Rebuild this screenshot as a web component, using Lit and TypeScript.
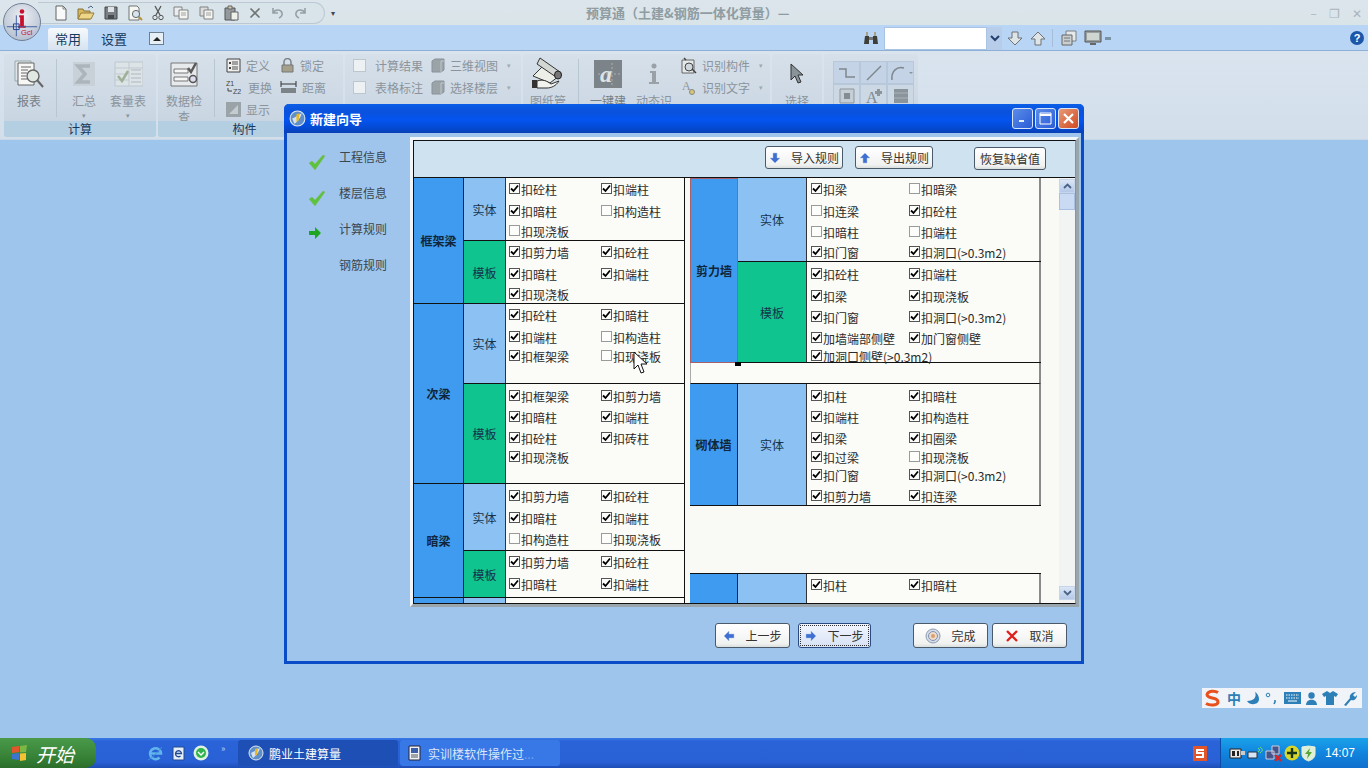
import { LitElement, css, html } from "lit";
import { customElement } from "lit/decorators.js";
import { classMap } from "lit/directives/class-map.js";

type Row = [number, string, boolean, string?, boolean?];
type Part = { kind: string; green?: boolean; height: number; rows: Row[] };
type Wall = { name: string; selected?: boolean; parts: Part[]; gapAfter?: number; gapKind?: string };

const leftWalls: Wall[] = [
  {
    name: "框架梁",
    parts: [
      { kind: "实体", height: 63, rows: [[22, "扣砼柱", true, "扣端柱", true], [21, "扣暗柱", true, "扣构造柱", false], [19, "扣现浇板", false]] },
      { kind: "模板", green: true, height: 63, rows: [[22, "扣剪力墙", true, "扣砼柱", true], [21, "扣暗柱", true, "扣端柱", true], [19, "扣现浇板", true]] },
    ],
  },
  {
    name: "次梁",
    parts: [
      { kind: "实体", height: 80, rows: [[22, "扣砼柱", true, "扣暗柱", true], [22, "扣端柱", true, "扣构造柱", false], [15, "扣框架梁", true, "扣现浇板", false]] },
      { kind: "模板", green: true, height: 100, rows: [[23, "扣框架梁", true, "扣剪力墙", true], [20, "扣暗柱", true, "扣端柱", true], [22, "扣砼柱", true, "扣砖柱", true], [16, "扣现浇板", true]] },
    ],
  },
  {
    name: "暗梁",
    parts: [
      { kind: "实体", height: 67, rows: [[24, "扣剪力墙", true, "扣砼柱", true], [20, "扣暗柱", true, "扣端柱", true], [22, "扣构造柱", false, "扣现浇板", false]] },
      { kind: "模板", green: true, height: 47, rows: [[22, "扣剪力墙", true, "扣砼柱", true], [22, "扣暗柱", true, "扣端柱", true]] },
    ],
  },
  { name: "", parts: [{ kind: "", height: 30, rows: [] }] },
];

const rightWalls: Wall[] = [
  {
    name: "剪力墙",
    selected: true,
    gapAfter: 21,
    gapKind: "lined",
    parts: [
      { kind: "实体", height: 84, rows: [[22, "扣梁", true, "扣暗梁", false], [21, "扣连梁", false, "扣砼柱", true], [21, "扣暗柱", false, "扣端柱", false], [19, "扣门窗", true, "扣洞口(>0.3m2)", true]] },
      { kind: "模板", green: true, height: 101, rows: [[24, "扣砼柱", true, "扣端柱", true], [19, "扣梁", true, "扣现浇板", true], [23, "扣门窗", true, "扣洞口(>0.3m2)", true], [19, "加墙端部侧壁", true, "加门窗侧壁", true], [18, "加洞口侧壁(>0.3m2)", true]] },
    ],
  },
  {
    name: "砌体墙",
    gapAfter: 68,
    gapKind: "closed",
    parts: [
      { kind: "实体", height: 122, rows: [[24, "扣柱", true, "扣暗柱", true], [18, "扣端柱", true, "扣构造柱", true], [24, "扣梁", true, "扣圈梁", true], [14, "扣过梁", true, "扣现浇板", false], [22, "扣门窗", true, "扣洞口(>0.3m2)", true], [20, "扣剪力墙", true, "扣连梁", true]] },
    ],
  },
  { name: "", parts: [{ kind: "", height: 30, rows: [[22, "扣柱", true, "扣暗柱", true]] }] },
];

const doc = (w = 16) => html`<svg width=${w} height=${w} viewBox="0 0 16 16"><path d="M3 1h7l3 3v11H3z" fill="#fdfdfa" stroke="#555"/><path d="M10 1v3h3" fill="none" stroke="#777"/></svg>`;
const qat = [
  doc(),
  html`<svg width="18" height="16" viewBox="0 0 18 16"><path d="M1 14V4h5l1 2h6v8z" fill="#d9b24a" stroke="#7c6420"/><path d="M1 14l3-6h13l-3 6z" fill="#f2d57a" stroke="#8c7026"/><path d="M11 3l3-2 2 2" fill="none" stroke="#357"/></svg>`,
  html`<svg width="16" height="16" viewBox="0 0 16 16"><path d="M2 2h12v12H2z" fill="#6d7278" stroke="#333"/><path d="M5 2h6v5H5z" fill="#dfe4e8"/><path d="M5 10h6v4H5z" fill="#30363b"/></svg>`,
  html`<svg width="16" height="16" viewBox="0 0 16 16"><path d="M2 1h8l2 2v12H2z" fill="#fafaf4" stroke="#666"/><circle cx="9" cy="9" r="3.6" fill="#d7e5ee" stroke="#555"/><path d="M12 12l3 3" stroke="#b48a20" stroke-width="2"/></svg>`,
  html`<svg width="14" height="16" viewBox="0 0 14 16"><path d="M4 1l5 9M10 1L5 10" stroke="#444" stroke-width="1.3" fill="none"/><circle cx="4" cy="12.5" r="2.2" fill="none" stroke="#444"/><circle cx="10" cy="12.5" r="2.2" fill="none" stroke="#444"/></svg>`,
  html`<svg width="17" height="16" viewBox="0 0 17 16"><path d="M1 2h8v9H1z" fill="#eee" stroke="#777"/><path d="M6 5h9v9H6z" fill="#f8f8f0" stroke="#777"/><path d="M8 8h5M8 10h5" stroke="#999"/></svg>`,
  html`<svg width="17" height="16" viewBox="0 0 17 16"><path d="M2 2h8v9H2z" fill="#ddd" stroke="#777"/><path d="M6 5h9v9H6z" fill="#f8f8f0" stroke="#777"/><path d="M8 8h5M8 10h5" stroke="#999"/></svg>`,
  html`<svg width="17" height="16" viewBox="0 0 17 16"><path d="M2 3h10v12H2z" fill="#8b8f92" stroke="#444"/><path d="M5 1h4v3H5z" fill="#d4c9a0" stroke="#555"/><path d="M8 7h7v8H8z" fill="#f2f2ea" stroke="#555"/></svg>`,
  html`<svg width="14" height="14" viewBox="0 0 14 14"><path d="M2.500 2.500l9 9M11.500 2.500l-9 9" stroke="#666" stroke-width="1.700"/></svg>`,
  html`<svg width="15" height="14" viewBox="0 0 15 14"><path d="M3 2v5h5M3 7c2-4 8-4 9 0 .5 2-1 4-3 5" fill="none" stroke="#8d969e" stroke-width="1.600"/></svg>`,
  html`<svg width="15" height="14" viewBox="0 0 15 14"><path d="M12 2v5H7M12 7c-2-4-8-4-9 0-.5 2 1 4 3 5" fill="none" stroke="#8d969e" stroke-width="1.600"/></svg>`,
];

const bigIcons = {
  report: html`<svg width="30" height="30" viewBox="0 0 30 30"><path d="M1 2h16v20H1z" fill="#dfe4e8" stroke="#9aa"/><path d="M4 4h16v22H4z" fill="#f7f8f6" stroke="#666"/><path d="M7 8h10M7 11h7M7 14h6M7 17h5M7 20h6" stroke="#666"/><circle cx="19" cy="17" r="6" fill="#dfe8e2" stroke="#666" stroke-width="1.400"/><path d="M23 21l6 7" stroke="#666" stroke-width="2"/></svg>`,
  sum: html`<svg width="24" height="26" viewBox="0 0 24 26"><path d="M1 1h22v24H1z" fill="#c9d1d8"/><path d="M18 5H6l7 8-7 8h12" fill="none" stroke="#adb5bc" stroke-width="3.500"/></svg>`,
  table: html`<svg width="30" height="28" viewBox="0 0 30 28"><path d="M2 2h28v24H2z" fill="#dde4e8" stroke="#bcc6cc"/><path d="M2 8h28M2 14h14M2 20h14M16 2v24" stroke="#c0c9cf"/><path d="M5 16l4 5 6-10" fill="none" stroke="#9fb098" stroke-width="2.500"/><path d="M18 10h10M18 14h10M18 18h10M18 22h10" stroke="#aeb7bd"/></svg>`,
  check: html`<svg width="28" height="26" viewBox="0 0 28 26"><path d="M1 2h26v23H1z" fill="#e6eaec" stroke="#777"/><path d="M4 8h14v4H4zM4 16h14v4H4z" fill="#f5f6f5" stroke="#777"/><path d="M18 7l3 4 5-9" fill="none" stroke="#5a5a5a" stroke-width="2.500"/><circle cx="23" cy="18" r="3.500" fill="#dde" stroke="#555" stroke-width="1.500"/></svg>`,
  drawing: html`<svg width="34" height="34" viewBox="0 0 34 34"><path d="M2 19L12 9l16 10-9 7z" fill="#eceee8" stroke="#333"/><path d="M9 1l20 14c3 3-1 8-4 5L6 7z" fill="#d3d7d3" stroke="#333"/><ellipse cx="27" cy="18" rx="3.500" ry="4" fill="#777" stroke="#222"/><path d="M1 23h5v8H1z" fill="#333"/><path d="M6 24c6-2 10 0 14 3l8-3c-3 5-8 7-12 7H6z" fill="#f2f3ef" stroke="#333"/></svg>`,
  onekey: html`<svg width="28" height="28" viewBox="0 0 28 28"><path d="M0 0h28v28H0z" fill="#7d8489"/><path d="M18 3v22M4 14h24" stroke="#aab0b4" stroke-dasharray="2 2"/><text x="6" y="22" font-family="Liberation Serif, serif" font-size="24" font-style="italic" font-weight="700" fill="#dfe3e3">a</text></svg>`,
  info: html`<svg width="14" height="22" viewBox="0 0 14 22"><circle cx="7" cy="3" r="2.500" fill="#9aa2a8"/><path d="M3 8h6v11h3v2H2v-2h3v-9H3z" fill="#9aa2a8"/></svg>`,
  pointer: html`<svg width="16" height="22" viewBox="0 0 16 22"><path d="M2 1l0 16 4-4 3 7 3-1-3-7h5z" fill="#89939a" stroke="#333"/></svg>`,
};

const smallIcons = {
  define: html`<svg width="15" height="15" viewBox="0 0 15 15"><path d="M1 1h13v13H1z" fill="#eee" stroke="#444"/><path d="M3 4h2v2H3zM3 9h2v2H3z" fill="#444"/><path d="M6 4h6M6 6h6M6 9h6M6 11h6" stroke="#555"/></svg>`,
  lock: html`<svg width="15" height="15" viewBox="0 0 15 15"><path d="M4 7V4a3.500 3.500 0 0 1 7 0v3" fill="none" stroke="#7b8288" stroke-width="1.500"/><path d="M2 7h11v7H2z" fill="#a5a08c" stroke="#777"/></svg>`,
  swap: html`<svg width="17" height="16" viewBox="0 0 17 16"><text x="0" y="7" font-size="7" font-family="Liberation Sans, sans-serif" fill="#444">Z1</text><text x="7" y="15" font-size="7" font-family="Liberation Sans, sans-serif" fill="#444">Z2</text><path d="M2 9v3h4" fill="none" stroke="#444"/></svg>`,
  distance: html`<svg width="17" height="14" viewBox="0 0 17 14"><path d="M1 1v6M16 1v6M1 4h15" stroke="#333" fill="none"/><path d="M1 8h15v5H1z" fill="#7d8489"/></svg>`,
  show: html`<svg width="15" height="15" viewBox="0 0 15 15"><path d="M0 0h15v15H0z" fill="#9aa3a8"/><path d="M3 12L12 3v9z" fill="#c5ccd0"/></svg>`,
  box: html`<svg width="14" height="15" viewBox="0 0 14 15"><path d="M1 3l3-2h9v11l-3 2H1z" fill="#9aa3a8" stroke="#89929a"/><path d="M10 3h3M10 3v11" stroke="#c0c7cb"/></svg>`,
  recog: html`<svg width="16" height="17" viewBox="0 0 16 17"><path d="M1 3h12v13H1z" fill="#e5e8e8" stroke="#666"/><circle cx="8" cy="10" r="4" fill="#cfd8dd" stroke="#444"/><path d="M3 1l2 2M11 12l4 4" stroke="#444" stroke-width="1.500"/></svg>`,
  recogText: html`<svg width="16" height="17" viewBox="0 0 16 17"><text x="1" y="11" font-size="12" font-family="Liberation Serif, serif" fill="#8d969d">A</text><circle cx="11" cy="13" r="2.500" fill="#d8c670" stroke="#888"/></svg>`,
};

const toolIcons = [
  html`<svg width="20" height="20" viewBox="0 0 20 20"><path d="M2 6h7v8h9" fill="none" stroke="#7d878e" stroke-width="1.500"/></svg>`,
  html`<svg width="20" height="20" viewBox="0 0 20 20"><path d="M3 17L17 3" stroke="#7d878e" stroke-width="1.500"/></svg>`,
  html`<svg width="26" height="20" viewBox="0 0 26 20"><path d="M4 17C3 8 9 3 16 5" fill="none" stroke="#7d878e" stroke-width="1.500"/><path d="M21 9l2 2 2-2" fill="#8a949b"/></svg>`,
  html`<svg width="20" height="20" viewBox="0 0 20 20"><path d="M3 3h14v14H3z" fill="#c5ced4" stroke="#8d979e"/><path d="M7 7h6v6H7z" fill="#828c93"/></svg>`,
  html`<svg width="20" height="20" viewBox="0 0 20 20"><text x="2" y="17" font-size="16" font-family="Liberation Serif, serif" fill="#7f8a91">A</text><path d="M13 3h3v2h2v3h-2v2h-3V8h-2V5h2z" fill="#8b959b"/></svg>`,
  html`<svg width="20" height="20" viewBox="0 0 20 20"><path d="M3 3h14v14H3z" fill="#8a949b"/><path d="M3 7h14M3 12h14" stroke="#aab3b9"/></svg>`,
];

const globe = (size = 16) => html`<svg width=${size} height=${size} viewBox="0 0 16 16"><circle cx="8" cy="8" r="7" fill="#5f8fc9" stroke="#dfe8f2"/><path d="M3 8c3-1 6-4 9-5-1 4-4 8-7 10z" fill="#d8e2ee"/><path d="M7 4l3-1-1 7-2 1z" fill="#e9b820"/></svg>`;

const arrowDown = html`<svg width="12" height="12" viewBox="0 0 12 12"><path d="M4 1h4v5h3l-5 5-5-5h3z" fill="#3f6fd0" stroke="#aac0ea" stroke-width=".5"/></svg>`;
const arrowUp = html`<svg width="12" height="12" viewBox="0 0 12 12"><path d="M4 11h4V6h3L6 1 1 6h3z" fill="#3f6fd0" stroke="#aac0ea" stroke-width=".5"/></svg>`;
const arrowLeft = html`<svg width="12" height="12" viewBox="0 0 12 12"><path d="M11 4v4H6v3L1 6l5-5v3z" fill="#3f6fd0" stroke="#aac0ea" stroke-width=".5"/></svg>`;
const arrowRight = html`<svg width="12" height="12" viewBox="0 0 12 12"><path d="M1 4v4h5v3l5-5-5-5v3z" fill="#3f6fd0" stroke="#aac0ea" stroke-width=".5"/></svg>`;
const greenCheck = html`<svg width="18" height="16" viewBox="0 0 18 16"><path d="M1 9l3-2 3 3 8-9 2 1-10 14z" fill="#5cc43a" stroke="#8fae80" stroke-width=".5"/></svg>`;
const greenArrow = html`<svg width="14" height="14" viewBox="0 0 14 14"><path d="M1 5h6V1l6 6-6 6V9H1z" fill="#1fa51f"/></svg>`;

@customElement("rule-check")
class RuleCheck extends LitElement {
  static properties = { label: {}, on: { type: Boolean } };
  label = "";
  on = false;
  static styles = css`
    :host { display: flex; align-items: flex-start; white-space: nowrap; }
    .box { width: 11px; height: 11px; flex: none; background: #fdfdfb; border: 1px solid #9a9a9a; box-sizing: border-box; display: flex; }
    .box.on { border-color: #555; }
    .txt { margin-left: 1px; line-height: 14px; color: #2a2a2a; font-size: 12px; }
  `;
  render() {
    return html`<span class=${classMap({ box: true, on: this.on })}>${this.on
      ? html`<svg width="9" height="9" viewBox="0 0 9 9"><path d="M1 4.500l2.500 2.500L8 1.500" fill="none" stroke="#000" stroke-width="1.800"/></svg>`
      : ""}</span><span class="txt">${this.label}</span>`;
  }
}

@customElement("app-root")
export class AppRoot extends LitElement {
  static styles = css`
    :host { display: flex; flex-direction: column; width: 1368px; height: 768px; overflow: hidden; position: relative; background: #9ec5ec; font-family: "Noto Sans CJK SC", "Liberation Sans", sans-serif; font-size: 12px; color: #222; }
    svg { display: block; flex: none; }

    .titlebar { height: 25px; flex: none; background: linear-gradient(#dce5ec, #d9e4e8); display: flex; align-items: center; }
    .qat { margin-left: 38px; width: 287px; height: 22px; margin-top: 1px; box-sizing: border-box; border: 1px solid #bcc9d4; border-left: none; border-radius: 0 12px 12px 0; background: #d8e3ea; display: flex; align-items: center; justify-content: space-between; padding: 0 16px 0 15px; }
    .qat svg { opacity: .88; }
    .qat-more { margin-left: 6px; width: 6px; color: #445; font-size: 8px; }
    .app-title { flex: 1; text-align: center; margin-left: -272px; font-size: 13px; font-weight: 700; color: #8f9ca2; white-space: nowrap; }
    .win-ctl { display: flex; gap: 12px; margin-right: 6px; color: #aab4ba; }
    .logo { position: absolute; left: 3px; top: 3px; width: 38px; height: 38px; border-radius: 50%; background: radial-gradient(circle at 50% 35%, #eef0f4, #a6b4c8); border: 1px solid #6f7f95; box-sizing: border-box; }

    .tabrow { height: 26px; flex: none; background: #b9d5f5; display: flex; align-items: flex-end; border-bottom: 1px solid #8fb0d6; box-sizing: border-box; color: #173a5e; padding-left: 48px; }
    .tab { width: 40px; height: 22px; display: flex; align-items: center; justify-content: center; font-size: 13px; padding-bottom: 1px; box-sizing: border-box; }
    .tab.on { background: linear-gradient(#f6f9fc, #d7e3f0); border-radius: 3px 3px 0 0; color: #13395c; }
    .tab.off { width: 52px; }
    .collapse { width: 15px; height: 13px; border: 1px solid #6b7f94; background: #e6eef6; box-sizing: border-box; margin: 0 0 5px 9px; display: flex; align-items: center; justify-content: center; }
    .collapse i { border: 4px solid transparent; border-bottom: 4px solid #222; border-top: none; }
    .find { margin-left: auto; display: flex; align-items: center; height: 24px; margin-right: 4px; }
    .find-input { margin-left: 5px; width: 103px; height: 23px; background: #fff; border: 1px solid #a9c4e2; box-sizing: border-box; }
    .find-drop { width: 15px; height: 23px; background: #b8cdea; margin-right: 1px; display: flex; align-items: center; justify-content: center; }
    .find-nav { width: 23px; display: flex; justify-content: center; }
    .find-sep { width: 1px; height: 18px; background: #a5bdd9; margin: 0 8px 0 3px; }
    .find-gap { margin-right: 7px; }
    .find-tri { margin-left: 3px; width: 6px; border-top: 3px solid #7b93a8; height: 0; }
    .help { margin-left: 239px; width: 14px; height: 14px; border-radius: 50%; background: #1c56a8; color: #fff; font-size: 11px; font-weight: 700; line-height: 14px; text-align: center; font-family: "Liberation Sans", sans-serif; }

    .ribbon { height: 89px; flex: none; background: linear-gradient(#d9e4ef, #d2deea); display: flex; padding: 3px 0 2px 4px; box-sizing: border-box; gap: 2px; color: #8b949c; border-bottom: 1px solid #c8d8e8; }
    .group { display: flex; flex-direction: column; border-radius: 3px; background: linear-gradient(#d6e0ea, #c6d3e0); overflow: hidden; flex: none; }
    .g-calc { width: 152px; } .g-part { width: 185px; } .g-view { width: 176px; } .g-draw { width: 247px; } .g-pick { width: 50px; } .g-tool { width: 94px; }
    .g-body { flex: 1; display: flex; min-height: 0; overflow: hidden; padding-left: 4px; }
    .g-foot { height: 16px; flex: none; background: #b4cee2; text-align: center; line-height: 16px; color: #15395c; }
    .g-part .g-foot { padding-right: 12px; }
    .big { width: 44px; flex: none; display: flex; flex-direction: column; align-items: center; }
    .big .ic { height: 33px; flex: none; display: flex; align-items: center; margin-top: 3px; }
    .big .lb { margin-top: 3px; line-height: 16px; text-align: center; flex: none; }
    .big.dark { color: #777f86; }
    .tri { margin-top: 2px; font-size: 7px; line-height: 8px; flex: none; }
    .w42 { width: 42px; } .w46 { width: 46px; }
    .vsep { width: 1px; height: 58px; margin: 5px 5px 0 6px; background: #b8c6d2; flex: none; }
    .sep-a { margin: 5px 11px 0 8px; }
    .sep-b { margin: 5px 6px 0 9px; }
    .smalls { display: grid; grid-template-rows: repeat(3, 22px); grid-auto-flow: column; }
    .sm { display: flex; align-items: center; gap: 5px; white-space: nowrap; }
    .sm-a { width: 54px; } .sm-b { width: 70px; }
    .cb { width: 13px; height: 13px; background: #eef1f3; border: 1px solid #bcc6cd; box-sizing: border-box; margin: 0 4px 0 4px; flex: none; }
    .pad-l { padding-left: 8px; }
    .pad-s { padding-left: 4px; }
    .dd { font-size: 7px; margin-left: 4px; color: #a0a9b0; }
    .tools { display: grid; grid-template-columns: 27px 27px 27px; grid-auto-rows: 23px; margin: 7px 0 0 5px; }
    .tool { display: flex; align-items: center; justify-content: center; background: #ccd8e4; border: 1px solid #b7c8da; box-sizing: border-box; }
    .tool-wide { background: #c4d4e6; }

    .desk { flex: 1; }

    .taskbar { height: 30px; flex: none; background: linear-gradient(#3a79e6 0, #2a63d8 12%, #2960d6 80%, #1d4cb4 100%); display: flex; align-items: stretch; color: #fff; }
    .start { width: 96px; box-sizing: border-box; background: linear-gradient(#4a9a4a, #357f35 70%, #2b6d2b); border-radius: 0 10px 10px 0; display: flex; align-items: center; padding-left: 10px; gap: 6px; font-size: 19px; font-style: italic; }
    .quick { display: flex; align-items: center; gap: 7px; margin-left: 51px; width: 91px; }
    .more { font-size: 9px; margin-top: -9px; margin-left: 5px; color: #bcd2f4; }
    .tb-btn { display: flex; align-items: center; gap: 5px; width: 160px; padding-left: 10px; box-sizing: border-box; margin: 2px 0; border-radius: 3px; font-size: 12px; white-space: nowrap; overflow: hidden; }
    .tb-btn.active { background: #1d4fb5; }
    .tb-btn.idle { background: #3878e6; margin-left: 2px; color: #dbe7f8; padding-left: 8px; }
    .dim { opacity: .35; }
    .sogou-task { margin-left: auto; display: flex; align-items: center; margin-right: 13px; }
    .tray { width: 148px; background: linear-gradient(#1aa2ea, #1184de 50%, #0f70cc); box-shadow: inset 1px 0 #0b4ba8; display: flex; align-items: center; padding-left: 9px; box-sizing: border-box; gap: 1px; }
    .clock { margin-left: 8px; font-family: "Liberation Sans", sans-serif; font-size: 12px; }

    .ime { position: absolute; left: 1202px; top: 688px; width: 160px; height: 20px; background: #f0f4f8; display: flex; align-items: center; justify-content: space-between; padding: 0 4px 0 1px; box-sizing: border-box; color: #2d7fb8; font-weight: 700; font-size: 14px; }

    .dialog { position: absolute; left: 284px; top: 104px; width: 800px; height: 560px; box-sizing: border-box; background: #9fc5ec; border: 3px solid #0a4cc8; border-top: none; border-radius: 5px 5px 0 0; display: flex; flex-direction: column; }
    .d-title { height: 29px; flex: none; margin: 0 -3px; border-radius: 5px 5px 0 0; background: linear-gradient(#0a5ee8 0, #0a52dc 25%, #0454f0 55%, #0449d0 85%, #0a3fb4 100%); display: flex; align-items: center; padding-left: 5px; gap: 4px; color: #fff; font-weight: 700; font-size: 13px; }
    .d-ctls { margin-left: auto; display: flex; gap: 2px; margin-right: 5px; }
    .d-ctl { width: 21px; height: 21px; border-radius: 3px; border: 1px solid #d8e4f8; box-sizing: border-box; background: linear-gradient(135deg, #5b8ce8, #2a5cd8); display: flex; align-items: center; justify-content: center; }
    .d-ctl.close { background: linear-gradient(135deg, #e89a78, #d04a20); }
    .d-body { flex: 1; display: flex; min-height: 0; }
    .nav { width: 123px; flex: none; padding-top: 12px; box-sizing: border-box; color: #3a4650; }
    .nav-row { height: 36px; display: flex; align-items: flex-start; padding-left: 21px; }
    .nav-ic { width: 18px; height: 18px; margin: 9px 13px 0 0; flex: none; }
    .nav-tx { line-height: 24px; white-space: nowrap; }
    .main { flex: 1; display: flex; flex-direction: column; padding-top: 4px; min-width: 0; }
    .panel { width: 669px; height: 470px; flex: none; box-sizing: border-box; border: 3px solid; border-color: #f3f6f8 #9aa6ae #9aa6ae #f3f6f8; display: flex; flex-direction: column; }
    .panel-in { flex: 1; border: 1px solid #111; border-right-color: #8b939a; display: flex; flex-direction: column; min-height: 0; }
    .head { height: 37px; flex: none; background: #cfe2f0; border-bottom: 1px solid #111; display: flex; justify-content: flex-end; align-items: flex-start; padding: 5px 29px 0 0; box-sizing: border-box; gap: 12px; }
    .btn { height: 23px; box-sizing: border-box; border: 1px solid #4a5a6a; border-radius: 3px; background: linear-gradient(#ffffff, #f0f2f0 85%, #d9dedd); display: flex; align-items: center; justify-content: center; gap: 10px; color: #333; white-space: nowrap; }
    .w78 { width: 78px; } .w72 { width: 72px; margin: 1px 0 0 29px; }
    .w75 { width: 75px; height: 25px; } .w73 { width: 73px; height: 25px; }
    .focus { border: 1px solid #2c4a80; outline: 1px dotted #333; outline-offset: -3px; background: linear-gradient(#f2f6ff, #d7e2f4); }
    .scroll { flex: 1; display: flex; min-height: 0; background: #f9faf6; overflow: hidden; }
    .col { flex: none; display: flex; flex-direction: column; }
    .col-l { width: 271px; --c1: 50px; --c2: 41px; --c3: 93px; --pad: 3px; }
    .col-r { width: 351px; margin-left: 5px; --c1: 48px; --c2: 68px; --c3: 99px; --pad: 4px; }
    .wall { display: flex; flex: none; position: relative; }
    .name { width: var(--c1); flex: none; box-sizing: border-box; background: #3f9bf0; display: flex; align-items: center; justify-content: center; font-weight: 700; color: #10263a; border-bottom: 1px solid #111; border-right: 1px solid #223; }
    .name.sel { border: 1px solid #a5616a; background: #3f9bf0; }
    .handle { position: absolute; left: 45px; bottom: -3px; width: 6px; height: 4px; background: #000; }
    .parts { flex: 1; min-width: 0; }
    .part { display: flex; box-sizing: border-box; border-bottom: 1px solid #111; }
    .kind { width: var(--c2); flex: none; background: #8cc2f3; display: flex; align-items: center; justify-content: center; border-right: 1px solid #333; color: #16324a; }
    .kind.green { background: #10c48f; }
    .body { flex: 1; min-width: 0; background: #fbfcf8; }
    .col-l .body { border-right: 1px solid #111; }
    .col-r .body { border-right: 2px solid #8a8a8a; }
    .rule { display: flex; align-items: center; padding-left: var(--pad); }
    .rule rule-check { width: var(--c3); flex: none; box-sizing: border-box; height: 14px; padding-top: 1px; }
    .rule rule-check + rule-check { width: auto; margin-left: -1px; }
    .gap { flex: none; box-sizing: border-box; }
    .gap.lined { background: #fbfcf8; border-bottom: 1px solid #111; border-left: 1px solid #aaa; border-right: 2px solid #8a8a8a; }
    .gap.closed { border-bottom: 1px solid #111; }
    .bar { margin-left: auto; width: 16px; flex: none; background: #f1f4f2; display: flex; flex-direction: column; justify-content: space-between; padding: 1px 0 3px; box-sizing: border-box; position: relative; }
    .sb { height: 14px; background: linear-gradient(#dbe6f6, #b4c8e8); border: 1px solid #c6d5ea; box-sizing: border-box; display: flex; align-items: center; justify-content: center; }
    .thumb { position: absolute; top: 15px; left: 0; right: 0; height: 17px; background: #c9daf2; border: 1px solid #a9c0e2; box-sizing: border-box; }
    .d-foot { display: flex; padding: 16px 14px 0 0; justify-content: flex-end; gap: 8px; }
    .ml34 { margin-left: 34px; }
    .ml-4 { margin-left: -4px; }
    .cursor { position: absolute; left: 346px; top: 247px; }
  `;

  renderRules(r: Row) {
    return html`<div class="rule" style="height:${r[0]}px">
      <rule-check .label=${r[1]} .on=${r[2]}></rule-check>
      ${r[3] ? html`<rule-check .label=${r[3]} .on=${!!r[4]}></rule-check>` : ""}
    </div>`;
  }

  renderWall(w: Wall) {
    return html`<div class="wall">
        <div class=${classMap({ name: true, sel: !!w.selected })}>${w.name}</div>
        <div class="parts">
          ${w.parts.map(
            (p) => html`<div class="part" style="height:${p.height}px">
              <div class=${classMap({ kind: true, green: !!p.green })}>${p.kind}</div>
              <div class="body">${p.rows.map((r) => this.renderRules(r))}</div>
            </div>`
          )}
        </div>
        ${w.selected ? html`<span class="handle"></span>` : ""}
      </div>
      ${w.gapAfter ? html`<div class="gap ${w.gapKind ?? ""}" style="height:${w.gapAfter}px"></div>` : ""}`;
  }

  renderRibbon() {
    return html`<div class="ribbon">
      <div class="group g-calc">
        <div class="g-body">
          <div class="big w42 dark"><span class="ic">${bigIcons.report}</span><span class="lb">报表</span></div>
          <span class="vsep"></span>
          <div class="big"><span class="ic">${bigIcons.sum}</span><span class="lb">汇总</span><span class="tri">▾</span></div>
          <div class="big"><span class="ic">${bigIcons.table}</span><span class="lb">套量表</span><span class="tri">▾</span></div>
        </div>
        <div class="g-foot">计算</div>
      </div>
      <div class="group g-part">
        <div class="g-body">
          <div class="big"><span class="ic">${bigIcons.check}</span><span class="lb">数据检查</span></div>
          <span class="vsep sep-a"></span>
          <div class="smalls">
            <div class="sm sm-a">${smallIcons.define}定义</div>
            <div class="sm sm-a">${smallIcons.swap}更换</div>
            <div class="sm sm-a">${smallIcons.show}显示</div>
            <div class="sm sm-b">${smallIcons.lock}锁定</div>
            <div class="sm sm-b">${smallIcons.distance}距离</div>
          </div>
        </div>
        <div class="g-foot">构件</div>
      </div>
      <div class="group g-view">
        <div class="g-body">
          <div class="smalls">
            <div class="sm"><span class="cb"></span>计算结果</div>
            <div class="sm"><span class="cb"></span>表格标注</div>
          </div>
          <div class="smalls pad-l">
            <div class="sm">${smallIcons.box}三维视图<span class="dd">▾</span></div>
            <div class="sm">${smallIcons.box}选择楼层<span class="dd">▾</span></div>
          </div>
        </div>
        <div class="g-foot"></div>
      </div>
      <div class="group g-draw">
        <div class="g-body">
          <div class="big w42"><span class="ic">${bigIcons.drawing}</span><span class="lb">图纸管理</span></div>
          <span class="vsep sep-b"></span>
          <div class="big w46 dark"><span class="ic">${bigIcons.onekey}</span><span class="lb">一键建</span></div>
          <div class="big w46"><span class="ic">${bigIcons.info}</span><span class="lb">动态识</span></div>
          <div class="smalls pad-s">
            <div class="sm">${smallIcons.recog}识别构件<span class="dd">▾</span></div>
            <div class="sm">${smallIcons.recogText}识别文字<span class="dd">▾</span></div>
          </div>
        </div>
        <div class="g-foot"></div>
      </div>
      <div class="group g-pick">
        <div class="g-body"><div class="big w42"><span class="ic">${bigIcons.pointer}</span><span class="lb">选择</span></div></div>
        <div class="g-foot"></div>
      </div>
      <div class="group g-tool">
        <div class="g-body">
          <div class="tools">${toolIcons.map((t, i) => html`<span class=${classMap({ tool: true, "tool-wide": i < 3 })}>${t}</span>`)}</div>
        </div>
        <div class="g-foot"></div>
      </div>
    </div>`;
  }

  renderDialog() {
    return html`<div class="dialog">
      <div class="d-title">
        ${globe(17)}<span>新建向导</span>
        <div class="d-ctls">
          <span class="d-ctl"><svg width="9" height="9" viewBox="0 0 9 9"><path d="M1 6h5v2H1z" fill="#e4ecf8"/></svg></span>
          <span class="d-ctl"><svg width="13" height="13" viewBox="0 0 13 13"><path d="M1 1h11v11H1z" fill="none" stroke="#fff"/><path d="M1 2h11v2H1z" fill="#fff"/></svg></span>
          <span class="d-ctl close"><svg width="13" height="13" viewBox="0 0 13 13"><path d="M2 2l9 9M11 2l-9 9" stroke="#fff" stroke-width="2.200"/></svg></span>
        </div>
      </div>
      <div class="d-body">
        <div class="nav">
          <div class="nav-row"><span class="nav-ic">${greenCheck}</span><span class="nav-tx">工程信息</span></div>
          <div class="nav-row"><span class="nav-ic">${greenCheck}</span><span class="nav-tx">楼层信息</span></div>
          <div class="nav-row"><span class="nav-ic">${greenArrow}</span><span class="nav-tx">计算规则</span></div>
          <div class="nav-row"><span class="nav-ic"></span><span class="nav-tx">钢筋规则</span></div>
        </div>
        <div class="main">
          <div class="panel"><div class="panel-in">
            <div class="head">
              <div class="btn w78">${arrowDown}导入规则</div>
              <div class="btn w78">${arrowUp}导出规则</div>
              <div class="btn w72">恢复缺省值</div>
            </div>
            <div class="scroll">
              <div class="col col-l">${leftWalls.map((w) => this.renderWall(w))}</div>
              <div class="col col-r">${rightWalls.map((w) => this.renderWall(w))}</div>
              <div class="bar">
                <span class="sb"><svg width="9" height="6" viewBox="0 0 9 6"><path d="M1 5l3.500-3.500L8 5" fill="none" stroke="#4a6488" stroke-width="1.800"/></svg></span>
                <span class="thumb"></span>
                <span class="sb"><svg width="9" height="6" viewBox="0 0 9 6"><path d="M1 1l3.500 3.500L8 1" fill="none" stroke="#4a6488" stroke-width="1.800"/></svg></span>
              </div>
            </div>
          </div></div>
          <div class="d-foot">
            <div class="btn w75">${arrowLeft}上一步</div>
            <div class="btn w73 focus">${arrowRight}下一步</div>
            <div class="btn w75 ml34"><svg width="16" height="16" viewBox="0 0 16 16"><circle cx="8" cy="8" r="7" fill="#d9dfe8" stroke="#8a9ab0"/><circle cx="8" cy="8" r="4.500" fill="#eedcc8" stroke="#8090b8"/><circle cx="8" cy="8" r="2" fill="#d8a070"/></svg>完成</div>
            <div class="btn w75 ml-4"><svg width="14" height="14" viewBox="0 0 14 14"><path d="M2 2l10 10M12 2L2 12" stroke="#e0201c" stroke-width="2.400"/></svg>取消</div>
          </div>
        </div>
      </div>
      <svg class="cursor" width="16" height="24" viewBox="0 0 16 24"><path d="M1 1v17l4-4 3 8 3-1-3-8h6z" fill="#fff" stroke="#111"/></svg>
    </div>`;
  }

  render() {
    return html`
      <div class="titlebar">
        <div class="qat">${qat}</div>
        <span class="qat-more">▾</span>
        <div class="app-title">预算通（土建&钢筋一体化算量）—</div>
        <div class="win-ctl"><span>–</span><span>❐</span><span>✕</span></div>
      </div>
      <svg class="logo" viewBox="0 0 38 38">
        <circle cx="19" cy="8" r="2.400" fill="#c8102e"/>
        <path d="M16 12h5v11h2v2h-8v-2h2v-9h-1z" fill="#c8102e"/>
        <path d="M3 24h32M13 12v22" stroke="#3b5da0"/>
        <path d="M10 21h6v6h-6z" fill="none" stroke="#1c3f98"/>
        <text x="18" y="33" font-family="Liberation Sans, sans-serif" font-size="8" fill="#c8102e">Gcl</text>
      </svg>
      <div class="tabrow">
        <div class="tab on">常用</div>
        <div class="tab off">设置</div>
        <div class="collapse"><i></i></div>
        <div class="find">
          <svg width="16" height="14" viewBox="0 0 16 14"><path d="M2 5h4v8H1zM10 5h4l1 8h-5z" fill="#3f3f3a"/><path d="M3 1h2v4H3zM11 1h2v4h-2z" fill="#a9a08a"/><path d="M6 6h4v3H6z" fill="#777"/></svg>
          <div class="find-input"></div>
          <div class="find-drop"><svg width="10" height="7" viewBox="0 0 10 7"><path d="M1 1l4 4 4-4" fill="none" stroke="#24406e" stroke-width="2"/></svg></div>
          <div class="find-nav"><svg width="16" height="15" viewBox="0 0 16 15"><path d="M5 1h6v6h4l-7 7-7-7h4z" fill="#dfe4e6" stroke="#6d7377"/></svg></div>
          <div class="find-nav"><svg width="16" height="15" viewBox="0 0 16 15"><path d="M5 14h6V8h4L8 1 1 8h4z" fill="#dfe4e6" stroke="#6d7377"/></svg></div>
          <span class="find-sep"></span>
          <span class="find-gap"><svg width="16" height="16" viewBox="0 0 16 16"><path d="M5 1h10v10H5z" fill="#e5e9ea" stroke="#7a8084"/><path d="M1 5h10v10H1z" fill="#c9ced0" stroke="#666"/><path d="M3 8h6M3 11h6" stroke="#777"/></svg></span>
          <svg width="18" height="16" viewBox="0 0 18 16"><path d="M1 1h16v11H1z" fill="#9aa09f" stroke="#555"/><path d="M3 3h12v7H3z" fill="#cfd6d2"/><path d="M6 13h6v2H6z" fill="#666"/></svg>
          <span class="find-tri"></span>
          <span class="help">?</span>
        </div>
      </div>
      ${this.renderRibbon()}
      <div class="desk"></div>
      <div class="taskbar">
        <div class="start">
          <svg width="20" height="18" viewBox="0 0 20 18"><path d="M2 3l7-1v6l-7 1z" fill="#e2572a"/><path d="M10 2l7-1-1 7-6 .5z" fill="#7ab843"/><path d="M2 10l7-1v7l-7-1z" fill="#3d74d0"/><path d="M10 9.500l6-.5v7l-6 1z" fill="#f2c230"/></svg>
          <span>开始</span>
        </div>
        <div class="quick">
          <svg width="17" height="18" viewBox="0 0 17 18"><path d="M3 9.500h11a5.500 5.500 0 1 0-1.500 4" fill="none" stroke="#62b4ec" stroke-width="2.600"/><path d="M1 16c3-1 9-7 14-13" fill="none" stroke="#3f8fd8"/></svg>
          <svg width="15" height="17" viewBox="0 0 15 17"><path d="M2 2h11v13H2z" fill="#e6eef8" stroke="#234a90"/><path d="M4.500 8.500h6a3 3 0 1 0-1 2.500" fill="none" stroke="#234a90" stroke-width="1.300"/></svg>
          <svg width="16" height="16" viewBox="0 0 16 16"><circle cx="8" cy="8" r="7.500" fill="#dff2df"/><circle cx="8" cy="8" r="5" fill="#2db44a"/><path d="M5 7l3 3 3-3" fill="none" stroke="#fff" stroke-width="1.500"/></svg>
          <span class="more">»</span>
        </div>
        <div class="tb-btn active">${globe(16)}<span>鹏业土建算量</span></div>
        <div class="tb-btn idle">
          <svg width="15" height="16" viewBox="0 0 15 16"><path d="M1 1h11v14H1z" fill="#eef1f6" stroke="#223"/><path d="M3 3h7v5H3z" fill="#3a5fa8"/><path d="M3 10h7M3 12h7" stroke="#555"/></svg>
          <span>实训楼软件操作过<span class="dim">...</span></span>
        </div>
        <div class="sogou-task"><svg width="14" height="15" viewBox="0 0 14 15"><path d="M0 0h14v15H0z" fill="#e0552a"/><path d="M11 4H4v3h6v4H3" fill="none" stroke="#fff" stroke-width="2"/></svg></div>
        <div class="tray">
          <svg width="17" height="14" viewBox="0 0 17 14"><path d="M1 3h11v9H1z" fill="#e8e8e8" stroke="#222"/><path d="M3 5h3v5H3zM8 5h2v5H8z" fill="#222"/><path d="M12 5h4v4h-4z" fill="#ccc"/></svg>
          <svg width="17" height="15" viewBox="0 0 17 15"><path d="M1 6h9v6H1z" fill="#d7e4f4" stroke="#234"/><path d="M11 2c2 1 2 3 0 4M13 1c3 2 3 4 0 6" fill="none" stroke="#74e36a"/></svg>
          <svg width="18" height="17" viewBox="0 0 18 17"><path d="M1 6h8v8H1zM7 1h7v8H7z" fill="#46548c" stroke="#ccd"/><path d="M10 10l6 6M16 10l-6 6" stroke="#e0201c" stroke-width="2"/></svg>
          <svg width="16" height="16" viewBox="0 0 16 16"><circle cx="8" cy="8" r="7.500" fill="#d9d62a"/><path d="M3 8h10M8 3v10" stroke="#15361a" stroke-width="2.400"/></svg>
          <svg width="15" height="17" viewBox="0 0 15 17"><path d="M1 2l6.500-1L14 2v7c0 4-3.500 6-6.500 7C4.500 15 1 13 1 9z" fill="#dff0d6" stroke="#e8f2e0"/><path d="M9 3L4 9h3l-1 5 5-7H8z" fill="#5aa53a"/></svg>
          <span class="clock">14:07</span>
        </div>
      </div>
      <div class="ime">
        <svg width="19" height="18" viewBox="0 0 19 18"><path d="M15 3.500c-3-2-10-2-11 2 0 5 11 2 11 7.500 0 3.500-8 4-12 1.500" fill="none" stroke="#e8501e" stroke-width="3"/></svg>
        <span>中</span>
        <svg width="14" height="15" viewBox="0 0 14 15"><path d="M9 1c2 5-1 9-8 9 3 5 12 4 12-2 0-3-2-6-4-7z" fill="#2d7fb8"/></svg>
        <svg width="14" height="14" viewBox="0 0 14 14"><circle cx="3" cy="4" r="1.800" fill="none" stroke="#2d7fb8"/><path d="M10 9v2l-1 2" fill="none" stroke="#2d7fb8" stroke-width="1.600"/></svg>
        <svg width="17" height="12" viewBox="0 0 17 12"><path d="M0 0h17v12H0z" fill="#2d7fb8"/><path d="M2 3h13M2 6h13" stroke="#fff" stroke-dasharray="1.500 1"/><path d="M4 9h9" stroke="#fff"/></svg>
        <svg width="11" height="13" viewBox="0 0 11 13"><circle cx="5.500" cy="3.500" r="3.200" fill="#2d7fb8"/><path d="M0 13c0-7 11-7 11 0z" fill="#2d7fb8"/></svg>
        <svg width="16" height="14" viewBox="0 0 16 14"><path d="M5 0l3 2 3-2 5 3-2 3-2-1v9H4V5L2 6 0 3z" fill="#2d7fb8"/></svg>
        <svg width="15" height="15" viewBox="0 0 15 15"><path d="M1 14l6-7c-1-3 2-6 6-6l-3 3 2 2 2-2c0 4-3 6-6 5l-5 6z" fill="#2d7fb8"/></svg>
      </div>
      ${this.renderDialog()}
    `;
  }
}

export { RuleCheck };
